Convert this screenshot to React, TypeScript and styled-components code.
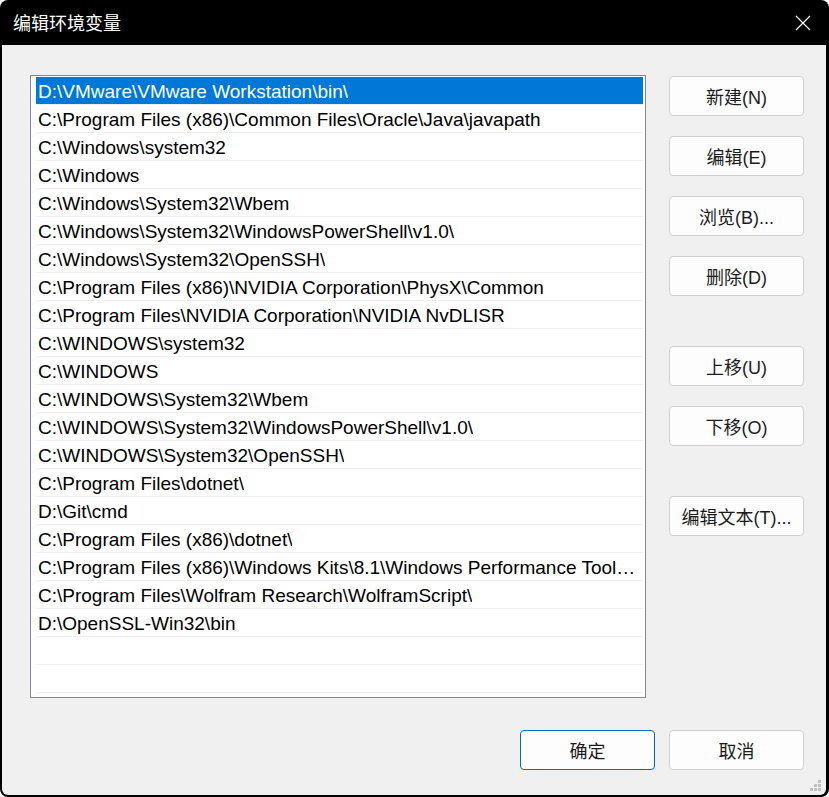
import styled, { createGlobalStyle } from "styled-components";

const GlobalStyle = createGlobalStyle`
  html, body {
    margin: 0;
    padding: 0;
    background: #fff;
  }
  body {
    font-family: "Liberation Sans", "Noto Sans CJK SC", sans-serif;
  }
`;

const paths = [
  "D:\\VMware\\VMware Workstation\\bin\\",
  "C:\\Program Files (x86)\\Common Files\\Oracle\\Java\\javapath",
  "C:\\Windows\\system32",
  "C:\\Windows",
  "C:\\Windows\\System32\\Wbem",
  "C:\\Windows\\System32\\WindowsPowerShell\\v1.0\\",
  "C:\\Windows\\System32\\OpenSSH\\",
  "C:\\Program Files (x86)\\NVIDIA Corporation\\PhysX\\Common",
  "C:\\Program Files\\NVIDIA Corporation\\NVIDIA NvDLISR",
  "C:\\WINDOWS\\system32",
  "C:\\WINDOWS",
  "C:\\WINDOWS\\System32\\Wbem",
  "C:\\WINDOWS\\System32\\WindowsPowerShell\\v1.0\\",
  "C:\\WINDOWS\\System32\\OpenSSH\\",
  "C:\\Program Files\\dotnet\\",
  "D:\\Git\\cmd",
  "C:\\Program Files (x86)\\dotnet\\",
  "C:\\Program Files (x86)\\Windows Kits\\8.1\\Windows Performance Toolkit\\",
  "C:\\Program Files\\Wolfram Research\\WolframScript\\",
  "D:\\OpenSSL-Win32\\bin",
  "",
  "",
  "",
];

const buttonGroups = [
  ["新建(N)", "编辑(E)", "浏览(B)...", "删除(D)"],
  ["上移(U)", "下移(O)"],
  ["编辑文本(T)..."],
];

const Window = styled.div`
  width: 829px;
  height: 797px;
  box-sizing: border-box;
  background: #000;
  border-radius: 8px;
  padding: 0 3px 2px 2px;
  display: flex;
  flex-direction: column;
  overflow: hidden;
`;

const TitleBar = styled.div`
  height: 45px;
  display: flex;
  align-items: center;
  justify-content: space-between;
  padding: 0 15px 0 11px;
  color: #fff;
  font-size: 18px;
`;

const Title = styled.span`
  margin-top: -2px;
`;

const Body = styled.div`
  position: relative;
  flex: 1;
  background: #f0f0f0;
  border-radius: 0 0 6px 6px;
  padding: 30px 22px 0 28px;
  display: flex;
  flex-direction: column;
`;

const Main = styled.div`
  display: flex;
  gap: 23px;
`;

const ListBox = styled.div`
  width: 616px;
  height: 623px;
  box-sizing: border-box;
  border: 1px solid #828790;
  background: #fff;
  padding: 1px 2px 0 5px;
  overflow: hidden;
`;

const Row = styled.div<{ $selected?: boolean }>`
  height: 28px;
  box-sizing: border-box;
  border-bottom: 1px solid #f0f0f0;
  padding: 2px 6px 0 2px;
  display: flex;
  align-items: center;
  font-size: 19px;
  color: ${(p) => (p.$selected ? "#fff" : "#000")};
  background: ${(p) => (p.$selected ? "#0078d7" : "transparent")};
  white-space: nowrap;
  overflow: hidden;
`;

const RowText = styled.span`
  overflow: hidden;
  text-overflow: ellipsis;
  white-space: nowrap;
`;

const Side = styled.div`
  display: flex;
  flex-direction: column;
  gap: 50px;
  padding-top: 1px;
`;

const Group = styled.div`
  display: flex;
  flex-direction: column;
  gap: 20px;
`;

const Button = styled.button<{ $primary?: boolean }>`
  width: 135px;
  height: 40px;
  box-sizing: border-box;
  background: #fdfdfd;
  border: 1px solid ${(p) => (p.$primary ? "#0067c0" : "#d0d0d0")};
  border-radius: 4px;
  font-family: "Liberation Sans", "Noto Sans CJK SC", sans-serif;
  font-size: 18px;
  color: #1b1b1b;
  padding: 0;
`;

const Footer = styled.div`
  margin-top: 32px;
  display: flex;
  justify-content: flex-end;
  gap: 14px;
`;

const Grip = styled.svg`
  position: absolute;
  right: 4px;
  bottom: 3px;
`;

const CloseIcon = () => (
  <svg width="16" height="16" viewBox="0 0 16 16">
    <path d="M1 1L15 15M15 1L1 15" stroke="#fff" strokeWidth="1.2" />
  </svg>
);

const App = () => {
  return (
    <>
      <GlobalStyle />
      <Window>
        <TitleBar>
          <Title>编辑环境变量</Title>
          <CloseIcon />
        </TitleBar>
        <Body>
          <Main>
            <ListBox>
              {paths.map((p, i) => (
                <Row key={i} $selected={i === 0}>
                  <RowText>{p}</RowText>
                </Row>
              ))}
            </ListBox>
            <Side>
              {buttonGroups.map((g, i) => (
                <Group key={i}>
                  {g.map((label) => (
                    <Button key={label}>{label}</Button>
                  ))}
                </Group>
              ))}
            </Side>
          </Main>
          <Footer>
            <Button $primary>确定</Button>
            <Button>取消</Button>
          </Footer>
          <Grip width="12" height="12" viewBox="0 0 12 12">
            <g fill="#c0c0c0">
              <rect x="8" y="0" width="3" height="3" />
              <rect x="4" y="4" width="3" height="3" />
              <rect x="8" y="4" width="3" height="3" />
              <rect x="0" y="8" width="3" height="3" />
              <rect x="4" y="8" width="3" height="3" />
              <rect x="8" y="8" width="3" height="3" />
            </g>
          </Grip>
        </Body>
      </Window>
    </>
  );
};

export default App;
